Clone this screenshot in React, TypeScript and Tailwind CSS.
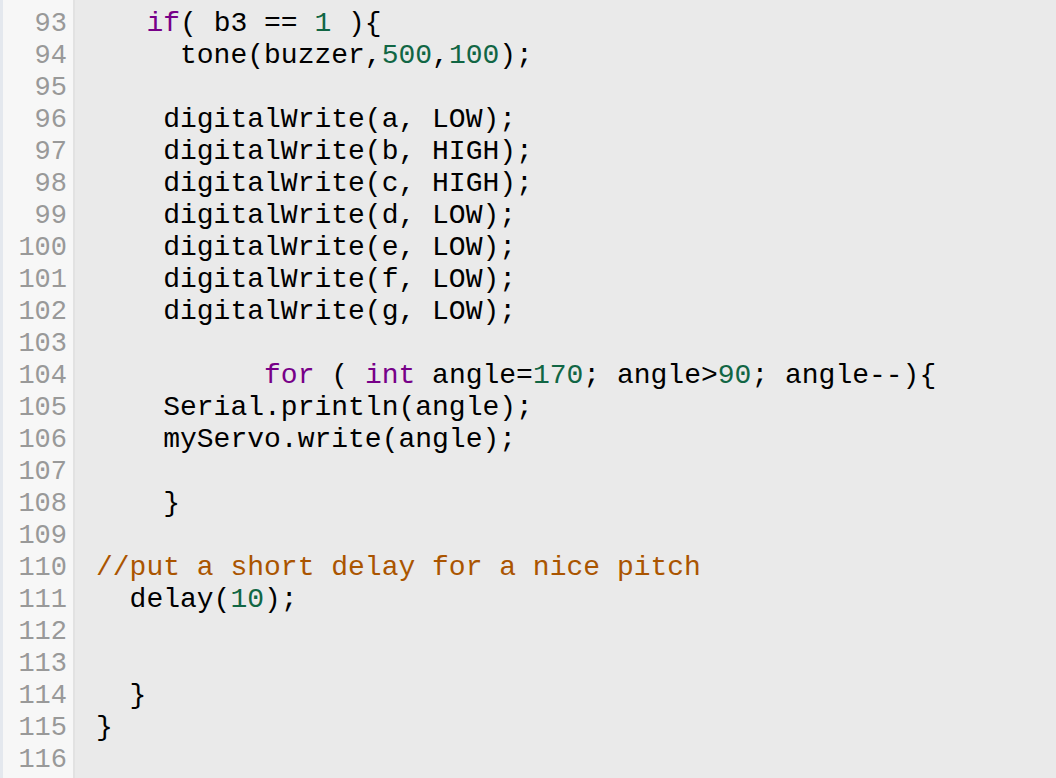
import React from "react";

type Tok = { t: string; c?: "k" | "n" | "c" };

const K = (t: string): Tok => ({ t, c: "k" });
const N = (t: string): Tok => ({ t, c: "n" });
const C = (t: string): Tok => ({ t, c: "c" });
const P = (t: string): Tok => ({ t });

const lines: { n: number; toks: Tok[] }[] = [
  { n: 93, toks: [P("   "), K("if"), P("( b3 == "), N("1"), P(" ){")] },
  { n: 94, toks: [P("     tone(buzzer,"), N("500"), P(","), N("100"), P(");")] },
  { n: 95, toks: [] },
  { n: 96, toks: [P("    digitalWrite(a, LOW);")] },
  { n: 97, toks: [P("    digitalWrite(b, HIGH);")] },
  { n: 98, toks: [P("    digitalWrite(c, HIGH);")] },
  { n: 99, toks: [P("    digitalWrite(d, LOW);")] },
  { n: 100, toks: [P("    digitalWrite(e, LOW);")] },
  { n: 101, toks: [P("    digitalWrite(f, LOW);")] },
  { n: 102, toks: [P("    digitalWrite(g, LOW);")] },
  { n: 103, toks: [] },
  { n: 104, toks: [P("          "), K("for"), P(" ( "), K("int"), P(" angle="), N("170"), P("; angle>"), N("90"), P("; angle--){")] },
  { n: 105, toks: [P("    Serial.println(angle);")] },
  { n: 106, toks: [P("    myServo.write(angle);")] },
  { n: 107, toks: [] },
  { n: 108, toks: [P("    }")] },
  { n: 109, toks: [] },
  { n: 110, toks: [C("//put a short delay for a nice pitch")] },
  { n: 111, toks: [P("  delay("), N("10"), P(");")] },
  { n: 112, toks: [] },
  { n: 113, toks: [] },
  { n: 114, toks: [P("  }")] },
  { n: 115, toks: [P("}")] },
  { n: 116, toks: [] },
];

const cls = (c?: string) =>
  c === "k" ? "text-[#770088]" : c === "n" ? "text-[#116644]" : c === "c" ? "text-[#aa5500]" : "text-black";

export default function App() {
  return (
    <div
      className="flex w-[1056px] h-[778px] overflow-hidden bg-[#eaeaea] text-[28px] leading-[32px]"
      style={{ fontFamily: '"Liberation Mono", monospace' }}
    >
      <div className="w-[75px] shrink-0 bg-[#f7f7f7] border-l-[3px] border-l-[#e4e8ee] border-r-2 border-r-[#e2e2e2] pt-[8px] pr-[6px] text-[27px]">
        {lines.map((l) => (
          <div key={l.n} className="h-[32px] text-right text-[#999999] whitespace-pre">
            {l.n}
          </div>
        ))}
      </div>
      <div className="flex-1 pt-[8px] pl-[21px]">
        {lines.map((l) => (
          <div key={l.n} className="h-[32px] whitespace-pre">
            {l.toks.map((t, i) => (
              <span key={i} className={cls(t.c)}>
                {t.t}
              </span>
            ))}
          </div>
        ))}
      </div>
    </div>
  );
}
